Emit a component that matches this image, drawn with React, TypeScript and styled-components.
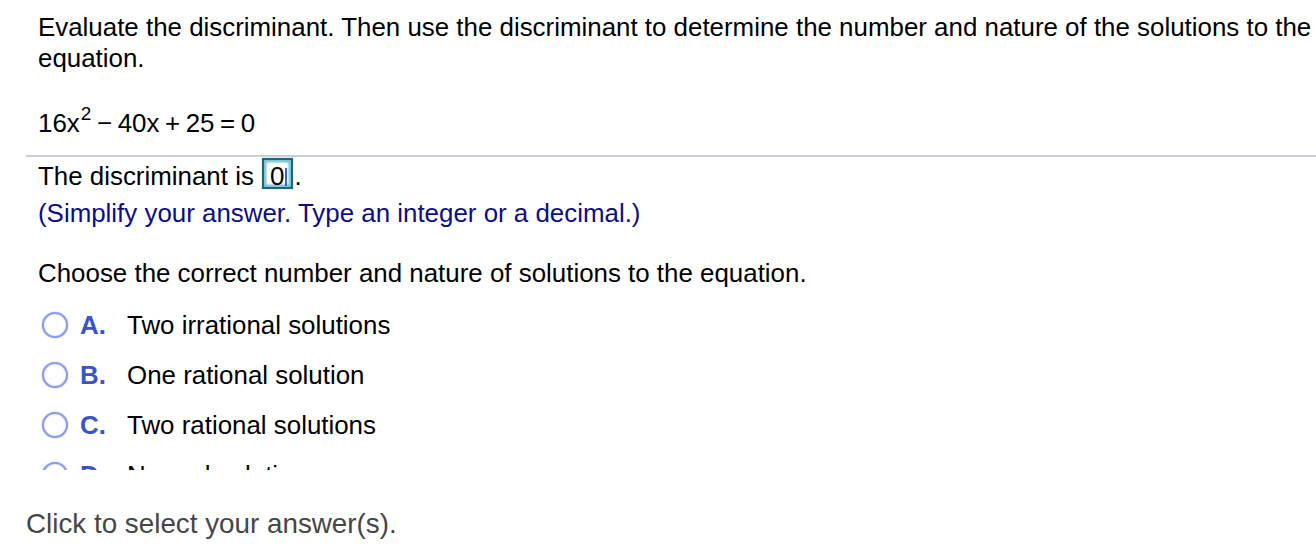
import React from "react";
import styled, { createGlobalStyle } from "styled-components";

const GlobalStyle = createGlobalStyle`
  html, body {
    margin: 0;
    padding: 0;
    background: #ffffff;
    overflow: hidden;
  }
  body {
    font-family: "Liberation Sans", Arial, Helvetica, sans-serif;
    color: #000000;
  }
`;

const Page = styled.div`
  width: 1316px;
  height: 546px;
  padding-left: 26px;
  box-sizing: border-box;
  overflow: hidden;
`;

const Question = styled.div`
  padding: 12px 0 0 12px;
  font-size: 25.9px;
  line-height: 31px;
`;

const Prompt = styled.div`
  white-space: nowrap;
`;

const Equation = styled.div`
  margin-top: 34px;
  white-space: nowrap;
  word-spacing: -1.6px;
`;

const Sup = styled.span`
  font-size: 19px;
  line-height: 0;
  vertical-align: 12px;
  margin-left: 1px;
`;

const Divider = styled.div`
  height: 2px;
  background: #c9cdd8;
  margin-top: 16px;
`;

const Answer = styled.div`
  padding: 1px 0 0 12px;
  font-size: 25.9px;
  line-height: 31px;
`;

const Line = styled.div`
  white-space: nowrap;
`;

const InputBox = styled.span`
  display: inline-block;
  box-sizing: border-box;
  height: 31px;
  line-height: 32px;
  padding: 0 4px 0 6px;
  margin-left: 1px;
  margin-right: 1px;
  border: 2px solid #16687a;
  box-shadow: inset 0 0 2px 2.5px #7cc3cf, 0 0 1px rgba(22, 104, 122, 0.6);
  background: #ffffff;
  vertical-align: baseline;
`;

const Caret = styled.span`
  display: inline-block;
  width: 2px;
  height: 18px;
  margin-left: 1px;
  background: #3c5be0;
  vertical-align: -1px;
`;

const Hint = styled.div`
  margin-top: 6px;
  color: #0c0c86;
  white-space: nowrap;
`;

const Instruction = styled.div`
  margin-top: 29px;
  white-space: nowrap;
`;

const Choices = styled.div`
  margin-top: 11px;
  height: 170px;
  overflow: hidden;
`;

const Choice = styled.div`
  display: flex;
  align-items: center;
  height: 50px;
  white-space: nowrap;
`;

const Radio = styled.span`
  display: inline-block;
  box-sizing: border-box;
  width: 26px;
  height: 26px;
  margin-left: 4px;
  border-radius: 50%;
  border: 2.5px solid #8b9de3;
  box-shadow: 0 0 1.5px rgba(80, 105, 215, 0.55),
    inset 0 0 1.5px rgba(80, 105, 215, 0.45);
  background: #ffffff;
  flex: none;
`;

const Letter = styled.span`
  display: inline-block;
  width: 47px;
  margin-left: 12px;
  font-weight: bold;
  color: #3a53c6;
`;

const Footer = styled.div`
  margin-top: 38px;
  font-size: 27.8px;
  line-height: 32px;
  color: #464646;
  white-space: nowrap;
`;

const choices = [
  { key: "A.", text: "Two irrational solutions" },
  { key: "B.", text: "One rational solution" },
  { key: "C.", text: "Two rational solutions" },
  { key: "D.", text: "No real solutions" },
];

export default function App() {
  return (
    <>
      <GlobalStyle />
      <Page>
        <Question>
          <Prompt>
            Evaluate the discriminant. Then use the discriminant to determine the
            number and nature of the solutions to the
            <br />
            equation.
          </Prompt>
          <Equation>
            16x<Sup>2</Sup> − 40x + 25 = 0
          </Equation>
        </Question>
        <Divider />
        <Answer>
          <Line>
            The discriminant is{" "}
            <InputBox>
              0<Caret />
            </InputBox>
            .
          </Line>
          <Hint>(Simplify your answer. Type an integer or a decimal.)</Hint>
          <Instruction>
            Choose the correct number and nature of solutions to the equation.
          </Instruction>
          <Choices>
            {choices.map((c) => (
              <Choice key={c.key}>
                <Radio />
                <Letter>{c.key}</Letter>
                <span>{c.text}</span>
              </Choice>
            ))}
          </Choices>
        </Answer>
        <Footer>Click to select your answer(s).</Footer>
      </Page>
    </>
  );
}
